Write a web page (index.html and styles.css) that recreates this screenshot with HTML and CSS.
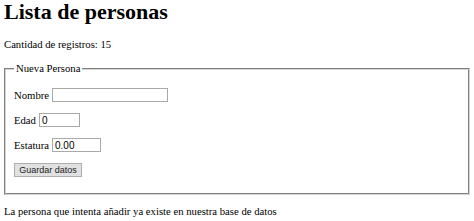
FILE: index.html
```html
<!DOCTYPE html>
<html lang="es">
<head>
    <meta charset="UTF-8">
    <title>Lista de personas</title>
    <link rel="stylesheet" href="styles.css">
</head>
<body>
    <h1>Lista de personas</h1>
    <p class="total">Cantidad de registros: 15</p>

    <form class="formulario">
        <fieldset>
            <legend>Nueva Persona</legend>
            <div class="campo">
                <label for="nombre">Nombre</label>
                <input type="text" id="nombre" class="txt-nombre">
            </div>
            <div class="campo">
                <label for="edad">Edad</label>
                <input type="text" id="edad" class="txt-edad" value="0">
            </div>
            <div class="campo">
                <label for="estatura">Estatura</label>
                <input type="text" id="estatura" class="txt-estatura" value="0.00">
            </div>
            <div class="campo">
                <button type="button" class="btn">Guardar datos</button>
            </div>
        </fieldset>
    </form>

    <p class="mensaje">La persona que intenta añadir ya existe en nuestra base de datos</p>
</body>
</html>
```

FILE: styles.css
```css
body {
    margin: 0 4px;
    font-family: 'Liberation Serif', 'Times New Roman', serif;
    font-size: 10.7px;
    color: #000;
    background: #fff;
}

h1 {
    margin: 0;
    font-size: 22px;
    line-height: 23px;
    font-weight: bold;
}

.total {
    margin: 15px 0 0;
    line-height: 13px;
}

.formulario {
    margin: 11px 0 0;
}

fieldset {
    margin: 0;
    padding: 13px 8px 16px 8px;
    border: 2px groove #d4d4d4;
}

legend {
    padding: 0 2px;
    line-height: 13px;
}

.campo {
    display: flex;
    align-items: center;
    gap: 3px;
    height: 14px;
    margin-bottom: 11px;
}

.campo:last-child {
    margin-bottom: 0;
}

input[type="text"] {
    box-sizing: border-box;
    height: 14px;
    margin: 0;
    padding: 0 2px;
    border: 1px solid #a9a9a9;
    font-family: 'Liberation Sans', Arial, sans-serif;
    font-size: 10px;
    color: #000;
}

.txt-nombre {
    width: 116px;
}

.txt-edad {
    width: 41px;
}

.txt-estatura {
    width: 49px;
}

.btn {
    box-sizing: border-box;
    height: 14px;
    width: 68px;
    padding: 0;
    border: 1px solid #adadad;
    background: #e1e1e1;
    font-family: 'Liberation Sans', Arial, sans-serif;
    font-size: 9px;
    line-height: 12px;
    color: #222;
}

.mensaje {
    margin: 10px 0 0;
    line-height: 13px;
}
```
